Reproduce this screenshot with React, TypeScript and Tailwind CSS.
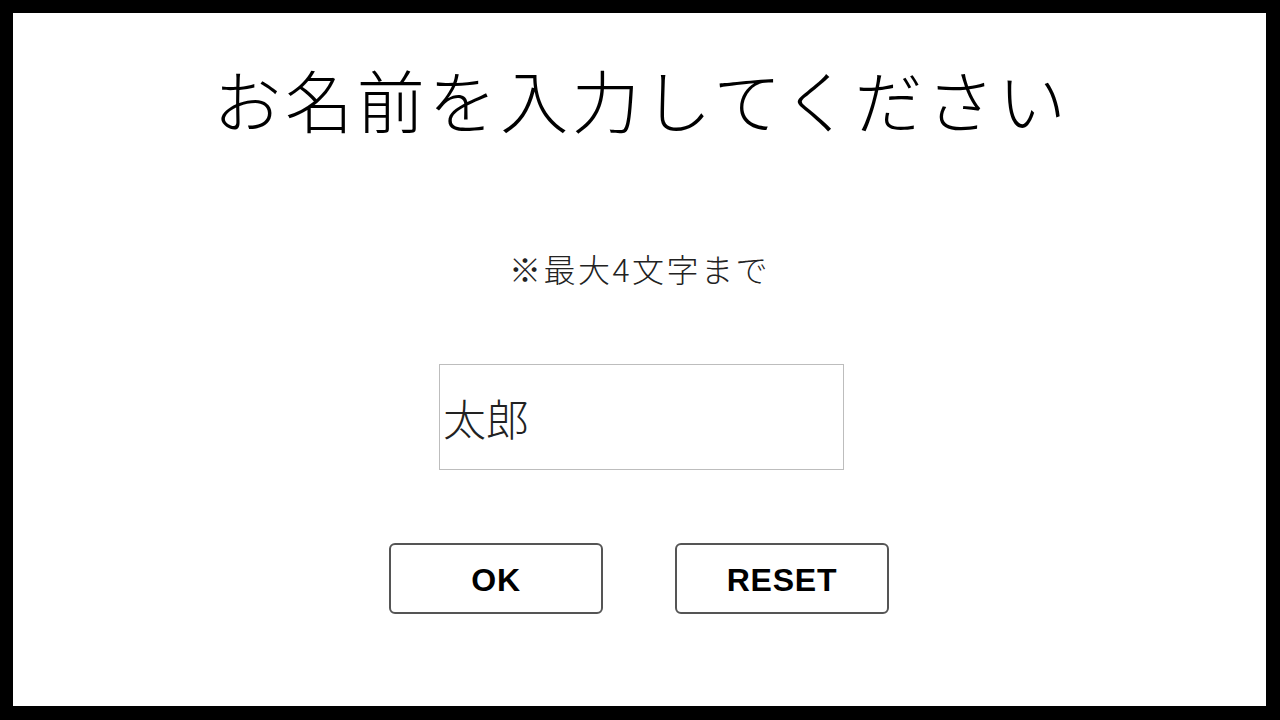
import React from "react";

export default function App() {
  return (
    <div className="w-[1280px] h-[720px] bg-black pt-[13px] pl-[13px] pr-[14px] pb-[14px]">
      <div
        className="w-full h-full bg-white flex flex-col items-center"
        style={{ fontFamily: '"Noto Sans CJK JP", "Noto Sans", sans-serif' }}
      >
        <h1 className="mt-[52px] text-[68px] leading-[68px] font-light text-black tracking-[3.7px] pl-[4px]">
          お名前を入力してください
        </h1>
        <p className="mt-[119px] text-[32px] leading-[32px] font-light text-[#222] tracking-[2.5px]">
          ※最大4文字まで
        </p>
        <div className="mt-[80px] ml-[4px] w-[405px] h-[106px] border border-[#bdbdbd] flex items-center pl-[3px]">
          <span className="text-[43px] leading-[43px] font-light text-[#222]">太郎</span>
        </div>
        <div className="mt-[73px] mr-[1px] flex gap-[72px]">
          <button
            className="w-[214px] h-[71px] border-2 border-[#555] rounded-[6px] bg-white text-[32px] leading-none font-bold text-black tracking-[0.8px] pt-[3px]"
            style={{ fontFamily: '"Liberation Sans", Arial, sans-serif' }}
          >
            OK
          </button>
          <button
            className="w-[214px] h-[71px] border-2 border-[#555] rounded-[6px] bg-white text-[32px] leading-none font-bold text-black tracking-[0.8px] pt-[3px]"
            style={{ fontFamily: '"Liberation Sans", Arial, sans-serif' }}
          >
            RESET
          </button>
        </div>
      </div>
    </div>
  );
}
